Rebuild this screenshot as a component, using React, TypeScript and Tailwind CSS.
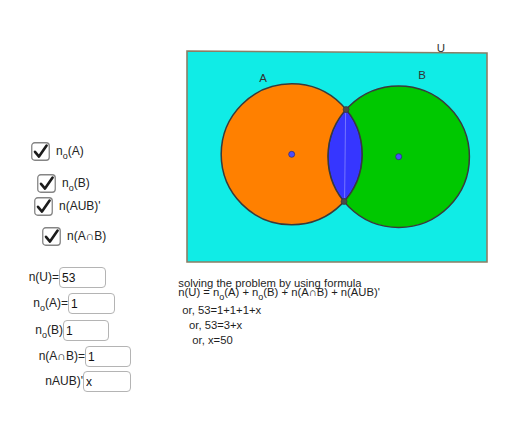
import { ReactNode } from "react";

const FONT = { fontFamily: '"Liberation Sans", Arial, sans-serif' };

function Check({ className = "", children }: { className?: string; children: ReactNode }) {
  return (
    <div className={`flex items-center gap-[6px] ${className}`}>
      <svg width="19" height="19" viewBox="0 0 19 19" className="shrink-0">
        <rect x="0.75" y="0.75" width="17.5" height="17.5" rx="3" fill="#fff" stroke="#858585" strokeWidth="1.3" />
        <path d="M4 9.8 L8 14.6 L15.6 3.6" fill="none" stroke="#1c1c1c" strokeWidth="2.6" strokeLinecap="round" strokeLinejoin="round" />
      </svg>
      <span className="leading-[19px]">{children}</span>
    </div>
  );
}

function Field({
  labelWidth,
  boxWidth,
  className = "",
  label,
  value,
}: {
  labelWidth: string;
  boxWidth: string;
  className?: string;
  label: ReactNode;
  value: string;
}) {
  return (
    <div className={`flex h-[21px] items-center ${className}`}>
      <span className={`${labelWidth} text-right leading-[21px]`}>{label}</span>
      <input
        readOnly
        value={value}
        className={`${boxWidth} h-[21px] rounded-[4px] border border-[#b4b4b4] bg-white pl-[2px] text-[12px] text-[#111] outline-none`}
        style={FONT}
      />
    </div>
  );
}

const Sub = ({ children }: { children: ReactNode }) => (
  <sub className="bottom-[-0.45em] text-[9px]">{children}</sub>
);

export default function App() {
  return (
    <div className="flex h-[447px] w-[512px] bg-white text-[12px] text-[#222]" style={FONT}>
      {/* left panel */}
      <div className="w-[178px] shrink-0 pt-[142px]">
        <Check className="ml-[31px]">
          n<Sub>o</Sub>(A)
        </Check>
        <Check className="ml-[37px] mt-[13px]">
          n<Sub>o</Sub>(B)
        </Check>
        <Check className="ml-[34px] mt-[4px]">n(AUB)'</Check>
        <Check className="ml-[42px] mt-[11px]">n(A∩B)</Check>

        <Field className="mt-[21px]" labelWidth="w-[59px]" boxWidth="w-[47px]" label="n(U)=" value="53" />
        <Field
          className="mt-[5px]"
          labelWidth="w-[68px]"
          boxWidth="w-[47px]"
          label={
            <>
              n<Sub>o</Sub>(A)=
            </>
          }
          value="1"
        />
        <Field
          className="mt-[6px]"
          labelWidth="w-[63px]"
          boxWidth="w-[46px]"
          label={
            <>
              n<Sub>o</Sub>(B)
            </>
          }
          value="1"
        />
        <Field className="mt-[5px]" labelWidth="w-[85px]" boxWidth="w-[46px]" label="n(A∩B)=" value="1" />
        <Field className="mt-[4px]" labelWidth="w-[83px]" boxWidth="w-[48px]" label="nAUB)'" value="x" />
      </div>

      {/* right panel */}
      <div className="flex flex-col pt-[38px]">
        <svg width="334" height="230" viewBox="178 38 334 230" className="block">
          <polygon points="187,51 487,53 487,262 187,262" fill="#10ece6" stroke="#8a7f66" strokeWidth="1.6" />
          <circle cx="291.7" cy="154.3" r="70.5" fill="#ff8000" />
          <circle cx="398.7" cy="156.7" r="70.7" fill="#00c800" />
          <path
            d="M346.1 109.5 A70.5 70.5 0 0 1 344.04 201.5 A70.7 70.7 0 0 1 346.1 109.5 Z"
            fill="#3636ff"
          />
          <line x1="345.6" y1="113" x2="344.6" y2="198" stroke="#ffffff" strokeOpacity="0.45" strokeWidth="0.7" />
          <path
            d="M346.1 109.5 A70.5 70.5 0 0 1 344.04 201.5 A70.7 70.7 0 0 1 346.1 109.5 Z"
            fill="none"
            stroke="#2a2a9a"
            strokeWidth="0.8"
          />
          <circle cx="291.7" cy="154.3" r="70.5" fill="none" stroke="#3a3a3a" strokeWidth="1.5" />
          <circle cx="398.7" cy="156.7" r="70.7" fill="none" stroke="#3a3a3a" strokeWidth="1.5" />
          <circle cx="346.1" cy="109.5" r="3" fill="#4a4a4a" stroke="#333" strokeWidth="0.6" />
          <circle cx="344.04" cy="201.5" r="3" fill="#4a4a4a" stroke="#333" strokeWidth="0.6" />
          <circle cx="291.7" cy="154.3" r="3" fill="#4b4bff" stroke="#2b2b6a" strokeWidth="0.7" />
          <circle cx="398.7" cy="156.7" r="3" fill="#4b4bff" stroke="#2b2b6a" strokeWidth="0.7" />
          <text x="263" y="81.7" textAnchor="middle" fontSize="11.5" fill="#333" style={FONT}>
            A
          </text>
          <text x="422" y="79.3" textAnchor="middle" fontSize="11.5" fill="#333" style={FONT}>
            B
          </text>
          <text x="441" y="52.3" textAnchor="middle" fontSize="11.5" fill="#333" style={FONT}>
            U
          </text>
        </svg>

        <div className="pt-[8px] text-[11.25px] leading-[15px] text-[#1e1e1e]">
          <div className="ml-[0.3px]">solving the problem by using formula</div>
          <div className="ml-[0.3px] mt-[-5.7px]">
            n(U) = n<Sub>o</Sub>(A) + n<Sub>o</Sub>(B) + n(A∩B) + n(AUB)'
          </div>
          <div className="ml-[4.3px] mt-[2.3px]">or, 53=1+1+1+x</div>
          <div className="ml-[11px] mt-[0.7px]">or, 53=3+x</div>
          <div className="ml-[14.3px]">or, x=50</div>
        </div>
      </div>
    </div>
  );
}
